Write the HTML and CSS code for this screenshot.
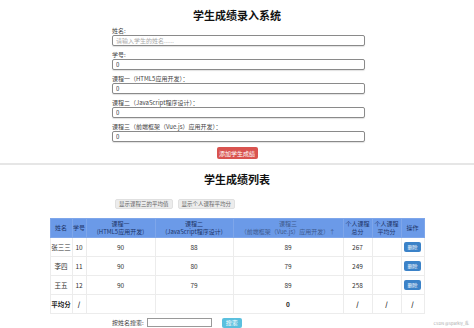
FILE: index.html
```html
<!DOCTYPE html>
<html lang="zh-CN">
<head>
  <meta charset="UTF-8" />
  <title>学生成绩录入系统</title>
  <link rel="stylesheet" href="styles.css">
</head>
<body>
  <h1>学生成绩录入系统</h1>

  <div class="form">
    <div class="field">
      <label>姓名:</label>
      <input type="text" placeholder="请输入学生的姓名......">
    </div>
    <div class="field">
      <label>学号:</label>
      <input type="text" value="0">
    </div>
    <div class="field">
      <label>课程一（HTML5应用开发）：</label>
      <input type="text" value="0">
    </div>
    <div class="field">
      <label>课程二（JavaScript程序设计）：</label>
      <input type="text" value="0">
    </div>
    <div class="field">
      <label>课程三（前端框架（Vue.js）应用开发）：</label>
      <input type="text" value="0">
    </div>
  </div>
  <div class="add-row"><button class="btn-add">添加学生成绩</button></div>

  <div class="divider"></div>

  <h2>学生成绩列表</h2>

  <div class="tools">
    <button class="btn-gray">显示课程三的平均值</button>
    <button class="btn-gray">显示个人课程平均分</button>
  </div>

  <table class="grades">
    <colgroup>
      <col style="width:22px"><col style="width:14px"><col style="width:69px"><col style="width:78px">
      <col style="width:110px"><col style="width:29px"><col style="width:29px"><col style="width:23px">
    </colgroup>
    <tr>
      <th>姓名</th><th>学号</th>
      <th>课程一<br>(HTML5应用开发)</th>
      <th>课程二<br>(JavaScript程序设计)</th>
      <th class="soft">课程三<br>（前端框架（Vue.js）应用开发）↑</th>
      <th>个人课程<br>总分</th>
      <th>个人课程<br>平均分</th>
      <th>操作</th>
    </tr>
    <tr><td>张三三</td><td>10</td><td>90</td><td>88</td><td>89</td><td>267</td><td></td><td><button class="btn-del">删除</button></td></tr>
    <tr><td>李四</td><td>11</td><td>90</td><td>80</td><td>79</td><td>249</td><td></td><td><button class="btn-del">删除</button></td></tr>
    <tr><td>王五</td><td>12</td><td>90</td><td>79</td><td>89</td><td>258</td><td></td><td><button class="btn-del">删除</button></td></tr>
    <tr class="avg"><td>平均分</td><td>/</td><td></td><td></td><td>0</td><td>/</td><td>/</td><td>/</td></tr>
  </table>

  <div class="search">
    <label>按姓名搜索:</label>
    <input type="text">
    <button class="btn-search">搜索</button>
  </div>

  <div class="mark">CSDN @Sparkly_乱</div>
</body>
</html>
```

FILE: styles.css
```css
body { margin: 0; font-family: "Noto Sans CJK SC", "Noto Sans", sans-serif; color: #333; background: #fff; font-size: 6px; }
h1, h2 { text-align: center; font-size: 11px; line-height: 14px; color: #111; font-weight: bold; }
h1 { margin: 8px 0 5px; }
h2 { margin: 7px 0 0; }
.form { width: 253px; margin: 0 auto; padding-left: 3px; }
.field { margin-bottom: 5px; }
.field label { display: block; line-height: 8px; color: #444; }
.field input { display: block; width: 100%; height: 11px; box-sizing: border-box; border: 1px solid #8a8a8a; border-radius: 2px; padding: 0 3px; font: inherit; font-size: 6px; color: #333; box-shadow: 0 1px 1px rgba(0,0,0,0.12); outline: none; }
.field input::placeholder { color: #aaa; }
.add-row { text-align: center; margin-top: 1px; }
.btn-add { height: 12px; width: 41px; padding: 0; border: none; border-radius: 2px; background: #d9534f; color: #fff; font: inherit; font-size: 6px; }
.divider { height: 2px; background: #e6e6e6; margin-top: 4px; }
.tools { width: 253px; margin: 13px auto 0; padding-left: 3px; display: flex; gap: 5px; }
.btn-gray { height: 10px; padding: 0 3px; margin-left: 3px; border: 1px solid #e0e0e0; border-radius: 2px; background: #ececec; color: #666; font: inherit; font-size: 5.5px; line-height: 8px; }
.btn-gray + .btn-gray { margin-left: 0; }
.grades { width: 374px; margin: 9px auto 0; border-collapse: collapse; table-layout: fixed; font-size: 6px; }
.grades th, .grades td { padding: 0; text-align: center; border: 1px solid #ececec; line-height: 8px; }
.grades tr { height: 19px; }
.grades th { background: #6b9ae8; color: #1e3568; font-weight: normal; border-color: #7ea6ea; }
.grades th.soft { color: #3f5a8f; }
.grades td { font-size: 6.5px; }
.grades .avg td { font-weight: bold; color: #222; }
.btn-del { height: 10px; width: 17px; padding: 0; border: none; border-radius: 2px; background: #3b82c8; color: #fff; font: inherit; font-size: 5px; font-weight: normal; }
.search { width: 253px; margin: 3px auto 0; padding-left: 3px; display: flex; align-items: center; height: 11px; font-size: 6px; }
.search label { color: #444; }
.search input { width: 65px; height: 9px; box-sizing: border-box; margin-left: 3px; border: 1px solid #999; padding: 0; }
.btn-search { margin-left: 10px; height: 10px; width: 20px; padding: 0; border: none; border-radius: 2px; background: #5bc0de; color: #fff; font: inherit; font-size: 6px; }
.mark { position: absolute; right: 5px; top: 320px; font-size: 4px; color: #aaa; }
```
